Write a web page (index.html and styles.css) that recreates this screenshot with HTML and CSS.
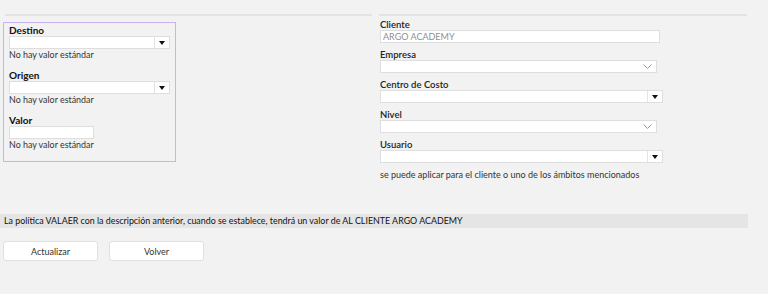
FILE: index.html
```html
<!DOCTYPE html>
<html lang="es">
  <head>
    <meta charset="UTF-8" />
    <meta name="viewport" content="width=device-width, initial-scale=1.0" />
    <title>Política VALAER</title>
    <link rel="stylesheet" href="styles.css">
  </head>
  <body>
    <div class="rules">
      <div class="rule rule-left"></div>
      <div class="rule rule-right"></div>
    </div>

    <div class="main">
      <div class="panel">
        <div class="field">
          <label class="label">Destino</label>
          <div class="combo">
            <span class="combo-btn"><span class="tri"></span></span>
          </div>
          <p class="hint">No hay valor estándar</p>
        </div>
        <div class="field">
          <label class="label">Origen</label>
          <div class="combo">
            <span class="combo-btn"><span class="tri"></span></span>
          </div>
          <p class="hint">No hay valor estándar</p>
        </div>
        <div class="field">
          <label class="label">Valor</label>
          <div class="text-input short"></div>
          <p class="hint">No hay valor estándar</p>
        </div>
      </div>

      <div class="scope">
        <div class="scope-field">
          <label class="label light">Cliente</label>
          <div class="text-input client">ARGO ACADEMY</div>
        </div>
        <div class="scope-field">
          <label class="label light">Empresa</label>
          <div class="select narrow">
            <svg class="chev" width="9" height="5" viewBox="0 0 9 5"><path d="M0.5 0.5 L4.5 4.5 L8.5 0.5" fill="none" stroke="#9a9a9a" stroke-width="1"/></svg>
          </div>
        </div>
        <div class="scope-field">
          <label class="label light">Centro de Costo</label>
          <div class="combo wide">
            <span class="combo-btn"><span class="tri"></span></span>
          </div>
        </div>
        <div class="scope-field">
          <label class="label light">Nivel</label>
          <div class="select narrow">
            <svg class="chev" width="9" height="5" viewBox="0 0 9 5"><path d="M0.5 0.5 L4.5 4.5 L8.5 0.5" fill="none" stroke="#9a9a9a" stroke-width="1"/></svg>
          </div>
        </div>
        <div class="scope-field">
          <label class="label light">Usuario</label>
          <div class="combo wide">
            <span class="combo-btn"><span class="tri"></span></span>
          </div>
        </div>
        <p class="note">se puede aplicar para el cliente o uno de los ámbitos mencionados</p>
      </div>
    </div>

    <div class="summary">
      La política VALAER con la descripción anterior, cuando se establece, tendrá un valor de AL CLIENTE ARGO ACADEMY
    </div>

    <div class="actions">
      <button class="btn">Actualizar</button>
      <button class="btn">Volver</button>
    </div>
  </body>
</html>
```

FILE: styles.css
```css
body {
  margin: 0;
  background-color: #f2f2f2;
  font-family: "Lato", "Open Sans", sans-serif;
  color: #222;
}

/* top separators */
.rules {
  display: flex;
  padding-top: 14px;
}
.rule {
  height: 2px;
  background-color: #e3e3e3;
}
.rule-left {
  margin-left: 5px;
  width: 367px;
}
.rule-right {
  margin-left: 7px;
  width: 368px;
}

.main {
  display: flex;
  align-items: flex-start;
  margin-top: 3px;
}

/* left bordered panel */
.panel {
  margin-top: 3px;
  margin-left: 3px;
  width: 161px;
  padding: 2px 5px 10px 5px;
  border: 1px solid #c9b3ef;
}
.field {
  margin-bottom: 9px;
}
.field:last-child {
  margin-bottom: 0;
}

.label {
  display: block;
  font-size: 10px;
  font-weight: 700;
  line-height: 11px;
  color: #111;
}
.label.light {
  font-size: 9.5px;
  font-weight: 600;
  color: #222;
}

.hint {
  margin: 0;
  font-size: 8.9px;
  line-height: 12px;
  color: #333;
}

.combo {
  display: flex;
  justify-content: flex-end;
  height: 11px;
  background-color: #fff;
  border: 1px solid #dedede;
}
.combo.wide {
  width: 281px;
}
.combo-btn {
  width: 14px;
  border-left: 1px solid #e4e4e4;
  display: flex;
  align-items: center;
  justify-content: center;
}
.tri {
  width: 0;
  height: 0;
  border-left: 3.5px solid transparent;
  border-right: 3.5px solid transparent;
  border-top: 4px solid #111;
}

.text-input {
  height: 11px;
  background-color: #fff;
  border: 1px solid #dedede;
  font-size: 9px;
  line-height: 11px;
  padding-left: 2px;
  color: #8f8f8f;
}
.text-input.short {
  width: 81px;
}
.text-input.client {
  width: 276px;
}

.select {
  display: flex;
  justify-content: flex-end;
  align-items: center;
  height: 11px;
  background-color: #fff;
  border: 1px solid #dedede;
  padding-right: 4px;
}
.select.narrow {
  width: 271px;
}

/* right column */
.scope {
  margin-left: 204px;
}
.scope-field {
  margin-bottom: 6px;
}
.note {
  margin: 0;
  font-size: 9px;
  line-height: 12px;
  color: #333;
}

.summary {
  margin-top: 33px;
  width: 744px;
  height: 14px;
  padding-left: 4px;
  background-color: #e5e5e5;
  font-size: 8.9px;
  line-height: 14px;
  color: #111;
}

.actions {
  display: flex;
  gap: 11px;
  margin-top: 13px;
  padding-left: 3px;
}
.btn {
  width: 95px;
  height: 20px;
  background-color: #fff;
  border: 1px solid #e0e0e0;
  border-radius: 3px;
  font-family: "Lato", "Open Sans", sans-serif;
  font-size: 9px;
  color: #333;
}
```
